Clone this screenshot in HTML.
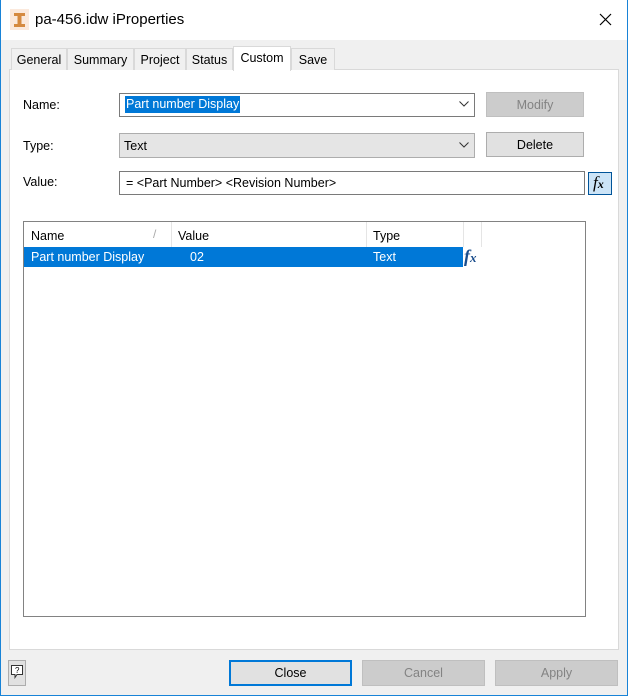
<!DOCTYPE html>
<html><head><style>
*{box-sizing:border-box;margin:0;padding:0}
body{width:628px;height:696px;background:#f0f0f0;font-family:"Liberation Sans",sans-serif;font-size:12px;color:#000;position:relative;overflow:hidden}
.a{position:absolute}
.win{left:0;top:0;width:628px;height:696px;border:1px solid #1883d7;border-top:none}
.tab{position:absolute;top:48px;height:22px;border:1px solid #d9d9d9;border-bottom:none;background:#f0f0f0;text-align:center;line-height:22px;font-size:12.5px}
.btn{position:absolute;height:25px;text-align:center;line-height:25px;font-size:12.5px}
</style></head><body>
<div class="a win"></div>
<div class="a" style="left:1px;top:0;width:626px;height:40px;background:#fff"></div>
<svg class="a" style="left:10px;top:9px" width="19" height="21"><rect width="19" height="21" fill="#fbe9dc"/><path d="M4 4h11v3h-3.5v8H15v3H4v-3h3.5V7H4z" fill="#d58a40"/></svg>
<div class="a" style="left:35px;top:11px;font-size:15px">pa-456.idw iProperties</div>
<svg class="a" style="left:599px;top:13px" width="13" height="13"><path d="M1 1L12 12M12 1L1 12" stroke="#000" stroke-width="1.2"/></svg>
<div class="a" style="left:9px;top:69px;width:610px;height:581px;background:#fff;border:1px solid #d9d9d9"></div>
<div class="tab" style="left:11px;width:56px">General</div>
<div class="tab" style="left:67px;width:67px">Summary</div>
<div class="tab" style="left:134px;width:52px">Project</div>
<div class="tab" style="left:186px;width:47px">Status</div>
<div class="tab" style="left:233px;top:46px;height:25px;width:58px;background:#fff;line-height:23px">Custom</div>
<div class="tab" style="left:291px;width:44px">Save</div>

<div class="a" style="left:23px;top:98px;font-size:12.5px">Name:</div>
<div class="a" style="left:119px;top:93px;width:356px;height:24px;border:1px solid #7a7a7a;background:#fff"></div>
<div class="a" style="left:125px;top:96px;height:17px;padding:0 1px;background:#0078d7;color:#fff;line-height:17px;font-size:12.5px">Part number Display</div>
<svg class="a" style="left:459px;top:101px" width="10" height="6"><path d="M0.5 0.5L5 5L9.5 0.5" stroke="#333" fill="none"/></svg>
<div class="btn" style="left:486px;top:92px;width:98px;background:#ccc;border:1px solid #bfbfbf;color:#838383">Modify</div>

<div class="a" style="left:23px;top:139px;font-size:12.5px">Type:</div>
<div class="a" style="left:119px;top:133px;width:356px;height:25px;border:1px solid #adadad;background:#e5e5e5;padding-left:4px;line-height:24px;font-size:12.5px">Text</div>
<svg class="a" style="left:459px;top:142px" width="10" height="6"><path d="M0.5 0.5L5 5L9.5 0.5" stroke="#333" fill="none"/></svg>
<div class="btn" style="left:486px;top:132px;width:98px;background:#e1e1e1;border:1px solid #adadad">Delete</div>

<div class="a" style="left:23px;top:175px;font-size:12.5px">Value:</div>
<div class="a" style="left:119px;top:171px;width:466px;height:24px;border:1px solid #7a7a7a;background:#fff;padding-left:6px;line-height:22px;font-size:12.5px">= &lt;Part Number&gt; &lt;Revision Number&gt;</div>
<div class="a" style="left:588px;top:172px;width:24px;height:23px;background:#cce4f7;border:1px solid #005499;font-family:'Liberation Serif',serif;font-style:italic;font-size:17px;line-height:20px;padding-left:4px">f<span style="font-size:12px;font-weight:bold">x</span></div>

<div class="a" style="left:23px;top:221px;width:563px;height:396px;border:1px solid #828282;background:#fff"></div>
<div class="a" style="left:171px;top:222px;width:1px;height:25px;background:#e5e5e5"></div>
<div class="a" style="left:366px;top:222px;width:1px;height:25px;background:#e5e5e5"></div>
<div class="a" style="left:463px;top:222px;width:1px;height:25px;background:#e5e5e5"></div>
<div class="a" style="left:481px;top:222px;width:1px;height:25px;background:#e5e5e5"></div>
<div class="a" style="left:31px;top:229px;font-size:12.5px">Name</div>
<div class="a" style="left:153px;top:227px;color:#aaa;font-size:12px">/</div>
<div class="a" style="left:178px;top:229px;font-size:12.5px">Value</div>
<div class="a" style="left:373px;top:229px;font-size:12.5px">Type</div>
<div class="a" style="left:24px;top:247px;width:439px;height:20px;background:#0078d7;color:#fff;font-size:12.5px;line-height:21px">
<span class="a" style="left:7px">Part number Display</span><span class="a" style="left:166px">02</span><span class="a" style="left:349px">Text</span></div>
<div class="a" style="left:464px;top:246px;font-family:'Liberation Serif',serif;font-style:italic;font-weight:bold;font-size:18px;color:#1a4d8c">f<span style="font-size:13px">x</span></div>

<div class="a" style="left:8px;top:660px;width:18px;height:26px;border:1px solid #adadad;background:#e1e1e1"></div>
<svg class="a" style="left:10px;top:664px" width="14" height="16"><path d="M1.5 1.5h11v9H7l-2 3v-3H1.5z" fill="#fff" stroke="#333"/><text x="5" y="9" font-size="8" font-family="Liberation Sans">?</text></svg>
<div class="btn" style="left:229px;top:660px;width:123px;height:26px;background:#e1e1e1;border:2px solid #0078d7;line-height:23px">Close</div>
<div class="btn" style="left:362px;top:660px;width:123px;height:26px;background:#ccc;border:1px solid #bfbfbf;color:#838383">Cancel</div>
<div class="btn" style="left:495px;top:660px;width:123px;height:26px;background:#ccc;border:1px solid #bfbfbf;color:#838383">Apply</div>
</body></html>
